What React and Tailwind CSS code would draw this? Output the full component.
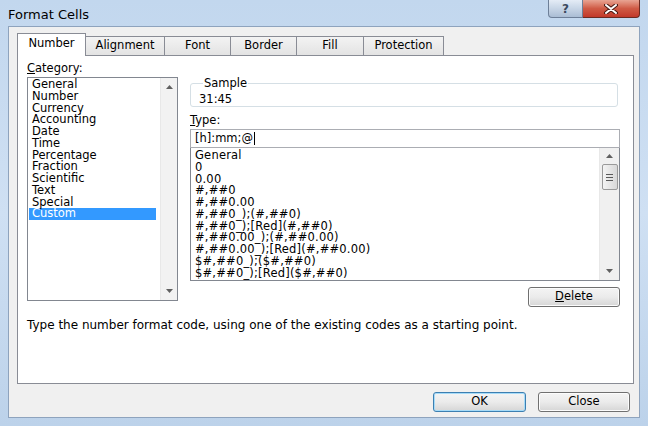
import React from 'react';

const categories = [
    'General', 'Number', 'Currency', 'Accounting', 'Date', 'Time',
    'Percentage', 'Fraction', 'Scientific', 'Text', 'Special', 'Custom'
];

const formats = [
    'General',
    '0',
    '0.00',
    '#,##0',
    '#,##0.00',
    '#,##0_);(#,##0)',
    '#,##0_);[Red](#,##0)',
    '#,##0.00_);(#,##0.00)',
    '#,##0.00_);[Red](#,##0.00)',
    '$#,##0_);($#,##0)',
    '$#,##0_);[Red]($#,##0)'
];

const tabs = [
    { label: 'Number', w: 'w-[69px]' },
    { label: 'Alignment', w: 'w-[80px]' },
    { label: 'Font', w: 'w-[67px]' },
    { label: 'Border', w: 'w-[67px]' },
    { label: 'Fill', w: 'w-[68px]' },
    { label: 'Protection', w: 'w-[81px]' }
];

const Arrow = ({ up }) => (
    <svg width="7" height="4" viewBox="0 0 7 4">
        <path d={up ? 'M0 4 L3.5 0 L7 4 Z' : 'M0 0 L3.5 4 L7 0 Z'} fill="#606060" />
    </svg>
);

const Button = ({ children, isDefault, className = '' }) => (
    <div
        className={`flex items-center justify-center h-[20px] rounded-[3px] border bg-gradient-to-b from-[#f4f4f4] via-[#ebebeb] to-[#d6d6d6] text-[11.5px] text-black ${isDefault ? 'border-[#3c7fb1] shadow-[inset_0_0_0_1px_#a6dbf8]' : 'border-[#707070] shadow-[inset_0_0_0_1px_#fcfcfc]'} ${className}`}
    >
        {children}
    </div>
);

const App = () => {
    return (
        <div className="w-[648px] h-[426px] flex flex-col bg-gradient-to-b from-[#c2d7ee] via-[#cfe0f3] to-[#bcd2ea] font-['DejaVu_Sans',sans-serif] text-black overflow-hidden">
            {/* Title bar */}
            <div className="h-[26px] flex items-start justify-between pl-[8px] pr-[8px]">
                <span className="mt-[5px] text-[13px] text-black">Format Cells</span>
                <div className="flex">
                    <div className="w-[35px] h-[18px] flex items-center justify-center rounded-bl-[4px] border border-t-0 border-[#6d7f98] bg-gradient-to-b from-[#e4ecf6] via-[#c7d5e6] to-[#aabdd4] text-[12px] font-bold text-[#3b4a5e]">
                        ?
                    </div>
                    <div className="w-[57px] h-[18px] flex items-center justify-center rounded-br-[4px] border border-t-0 border-l-0 border-[#6b2a22] bg-gradient-to-b from-[#e8a493] via-[#cf5a45] to-[#c2382a]">
                        <svg width="14" height="10" viewBox="0 0 14 10">
                            <path d="M2 1 L12 9 M12 1 L2 9" stroke="#4a1a14" strokeWidth="4" strokeLinecap="round" />
                            <path d="M2 1 L12 9 M12 1 L2 9" stroke="#ffffff" strokeWidth="2" strokeLinecap="round" />
                        </svg>
                    </div>
                </div>
            </div>

            {/* Client area */}
            <div className="flex-1 mx-[8px] mb-[8px] bg-[#f0f0f0] border border-[#8ea3bd] flex flex-col">
                {/* Tabs */}
                <div className="flex items-end h-[21px] mt-[7px] pl-[8px]">
                    {tabs.map((tab, i) => (
                        <div
                            key={tab.label}
                            className={`${tab.w} flex items-center justify-center border border-[#898c95] text-[11.5px] ${i === 0 ? 'h-[23px] bg-white border-b-0 relative z-10 -mb-px pb-[3px]' : 'h-[19px] -ml-px bg-gradient-to-b from-[#f3f3f3] to-[#e3e3e3] border-b-0'}`}
                        >
                            {tab.label}
                        </div>
                    ))}
                </div>

                {/* Panel */}
                <div className="ml-[8px] mr-[5px] h-[329px] bg-white border border-[#898c95] flex flex-col pl-[9px] pr-[13px]">
                    <div className="flex mt-[5px]">
                        {/* Category */}
                        <div className="w-[151px] flex flex-col">
                            <span className="text-[11.5px] leading-[14px]">
                                <span className="underline">C</span>ategory:
                            </span>
                            <div className="mt-[2px] h-[224px] border border-[#828790] flex">
                                <div className="flex-1 pt-[1px] pl-[1px] mr-[4px]">
                                    {categories.map((c) => (
                                        <div
                                            key={c}
                                            className={`h-[11.75px] leading-[11.75px] text-[11.5px] pl-[3px] ${c === 'Custom' ? 'bg-[#3399ff] text-white' : ''}`}
                                        >
                                            {c}
                                        </div>
                                    ))}
                                </div>
                                <div className="w-[17px] bg-[#f2f2f2] border-l border-[#e8e8e8] flex flex-col items-center justify-between py-[7px]">
                                    <Arrow up />
                                    <Arrow />
                                </div>
                            </div>
                        </div>

                        {/* Right side */}
                        <div className="w-[430px] ml-[12px] flex flex-col">
                            <fieldset className="mt-[16px] mr-[2px] h-[30px] border border-[#d5dfe5] rounded-[3px] pl-[8px]">
                                <legend className="ml-[4px] px-[1px] text-[11.5px] leading-[12px]">Sample</legend>
                                <div className="text-[11.5px] leading-[12px] mt-[4px]">31:45</div>
                            </fieldset>
                            <span className="mt-[6px] text-[11.5px] leading-[14px]">
                                <span className="underline">T</span>ype:
                            </span>
                            <div className="mt-[2px] h-[19px] border border-[#abadb3] flex items-center pl-[4px] text-[11.5px]">
                                [h]:mm;@<span className="ml-px w-px h-[13px] bg-black" />
                            </div>
                            <div className="h-[133px] border border-t-0 border-[#828790] flex">
                                <div className="flex-1 pt-[2px] pl-[4px]">
                                    {formats.map((f, i) => (
                                        <div key={i} className="h-[11.75px] leading-[11.75px] text-[11.5px] tracking-[0.2px] whitespace-pre">
                                            {f}
                                        </div>
                                    ))}
                                </div>
                                <div className="w-[20px] bg-[#f0f0f0] border-l border-[#e8e8e8] flex flex-col items-center pt-[6px] pb-[7px]">
                                    <Arrow up />
                                    <div className="mt-[6px] w-[16px] h-[26px] rounded-[2px] border border-[#9a9a9a] bg-gradient-to-r from-[#f4f4f4] to-[#d8d8d8] flex flex-col items-center justify-center gap-[2px]">
                                        <div className="w-[7px] h-px bg-[#5a5a5a]" />
                                        <div className="w-[7px] h-px bg-[#5a5a5a]" />
                                        <div className="w-[7px] h-px bg-[#5a5a5a]" />
                                    </div>
                                    <div className="flex-1" />
                                    <Arrow />
                                </div>
                            </div>
                            <div className="flex justify-end mt-[6px]">
                                <Button className="w-[92px]">
                                    <span><span className="underline">D</span>elete</span>
                                </Button>
                            </div>
                        </div>
                    </div>
                    <p className="mt-[11px] text-[12px] leading-[14px]">
                        Type the number format code, using one of the existing codes as a starting point.
                    </p>
                </div>

                {/* Dialog buttons */}
                <div className="flex justify-end gap-[12px] mt-[8px] mr-[9px]">
                    <Button isDefault className="w-[93px]">OK</Button>
                    <Button className="w-[92px]">Close</Button>
                </div>
            </div>
        </div>
    );
};

export default App;
